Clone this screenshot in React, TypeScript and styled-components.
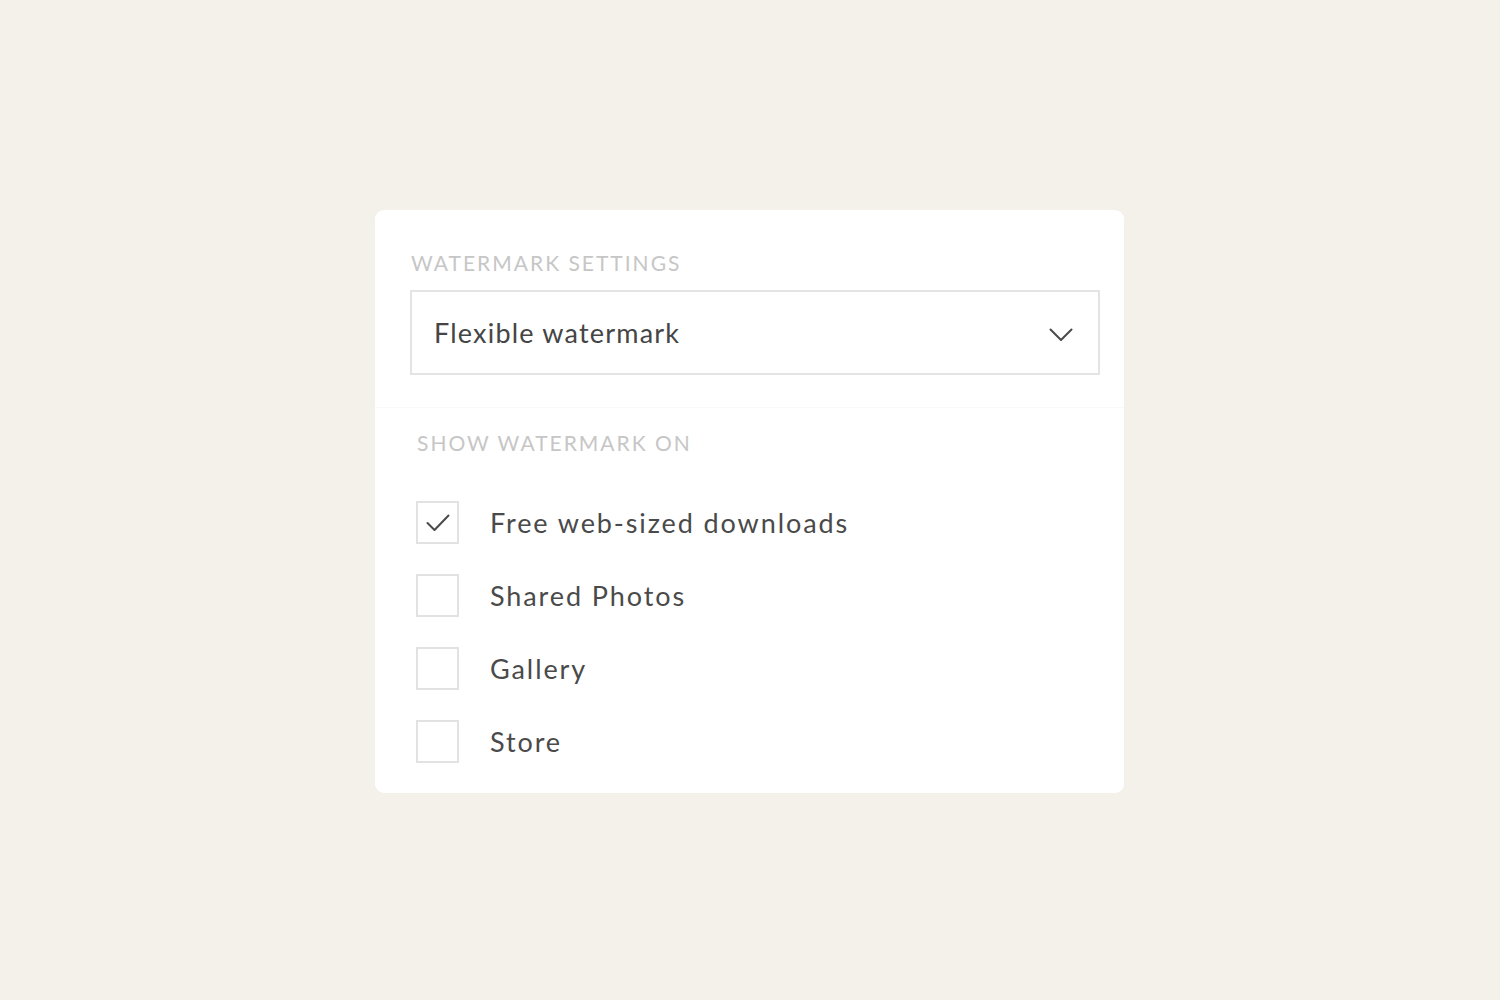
import React from "react";
import styled, { createGlobalStyle } from "styled-components";

const Global = createGlobalStyle`
  html, body { margin: 0; padding: 0; }
  body {
    background: #f4f1eb;
    font-family: Lato, "Open Sans", sans-serif;
    -webkit-font-smoothing: antialiased;
  }
`;

const Page = styled.div`
  width: 1500px;
  height: 1000px;
  display: flex;
  justify-content: center;
  padding-top: 210px;
  box-sizing: border-box;
`;

const Card = styled.div`
  width: 749px;
  height: 583px;
  margin-left: -1px;
  background: #ffffff;
  border-radius: 9px;
  box-sizing: border-box;
  display: flex;
  flex-direction: column;
`;

const TopSection = styled.div`
  padding: 40px 24px 32px 35px;
  border-bottom: 1px solid #f8f8f8;
`;

const SectionLabel = styled.div<{ $indent?: number }>`
  font-size: 21px;
  line-height: 26px;
  letter-spacing: 2px;
  color: #c6c6c6;
  text-transform: uppercase;
  padding-left: ${(p) => p.$indent ?? 1}px;
`;

const Select = styled.div`
  margin-top: 14px;
  height: 85px;
  border: 2px solid #e4e4e4;
  box-sizing: border-box;
  display: flex;
  align-items: center;
  justify-content: space-between;
  padding: 0 25px 0 22px;
`;

const SelectText = styled.span`
  font-size: 27px;
  letter-spacing: 1.2px;
  color: #454545;
`;

const ChevronWrap = styled.span`
  display: flex;
  margin-top: 5px;
`;

const BottomSection = styled.div`
  padding: 22px 24px 0 41px;
`;

const List = styled.div`
  margin-top: 45px;
  display: flex;
  flex-direction: column;
  gap: 30px;
`;

const Row = styled.label`
  display: flex;
  align-items: center;
  gap: 31px;
`;

const Box = styled.span`
  width: 43px;
  height: 43px;
  box-sizing: border-box;
  border: 2px solid #e2e2e2;
  display: flex;
  align-items: center;
  justify-content: center;
  flex-shrink: 0;
`;

const RowText = styled.span`
  font-size: 27px;
  letter-spacing: 1.9px;
  color: #4a4a4a;
`;

const Chevron = () => (
  <svg width="24" height="14" viewBox="0 0 24 14" fill="none">
    <path d="M1.5 1.5 L12 12 L22.5 1.5" stroke="#4a4a4a" strokeWidth="2" strokeLinecap="round" strokeLinejoin="round" />
  </svg>
);

const Check = () => (
  <svg width="24" height="18" viewBox="0 0 24 18" fill="none">
    <path d="M1.5 9 L8.5 16 L22.5 1.5" stroke="#4a4a4a" strokeWidth="2" strokeLinecap="round" strokeLinejoin="round" />
  </svg>
);

const items = [
  { label: "Free web-sized downloads", checked: true },
  { label: "Shared Photos", checked: false },
  { label: "Gallery", checked: false },
  { label: "Store", checked: false },
];

export default function App() {
  return (
    <>
      <Global />
      <Page>
        <Card>
          <TopSection>
            <SectionLabel>Watermark Settings</SectionLabel>
            <Select>
              <SelectText>Flexible watermark</SelectText>
              <ChevronWrap>
                <Chevron />
              </ChevronWrap>
            </Select>
          </TopSection>
          <BottomSection>
            <SectionLabel $indent={1}>Show Watermark On</SectionLabel>
            <List>
              {items.map((it) => (
                <Row key={it.label}>
                  <Box>{it.checked && <Check />}</Box>
                  <RowText>{it.label}</RowText>
                </Row>
              ))}
            </List>
          </BottomSection>
        </Card>
      </Page>
    </>
  );
}
